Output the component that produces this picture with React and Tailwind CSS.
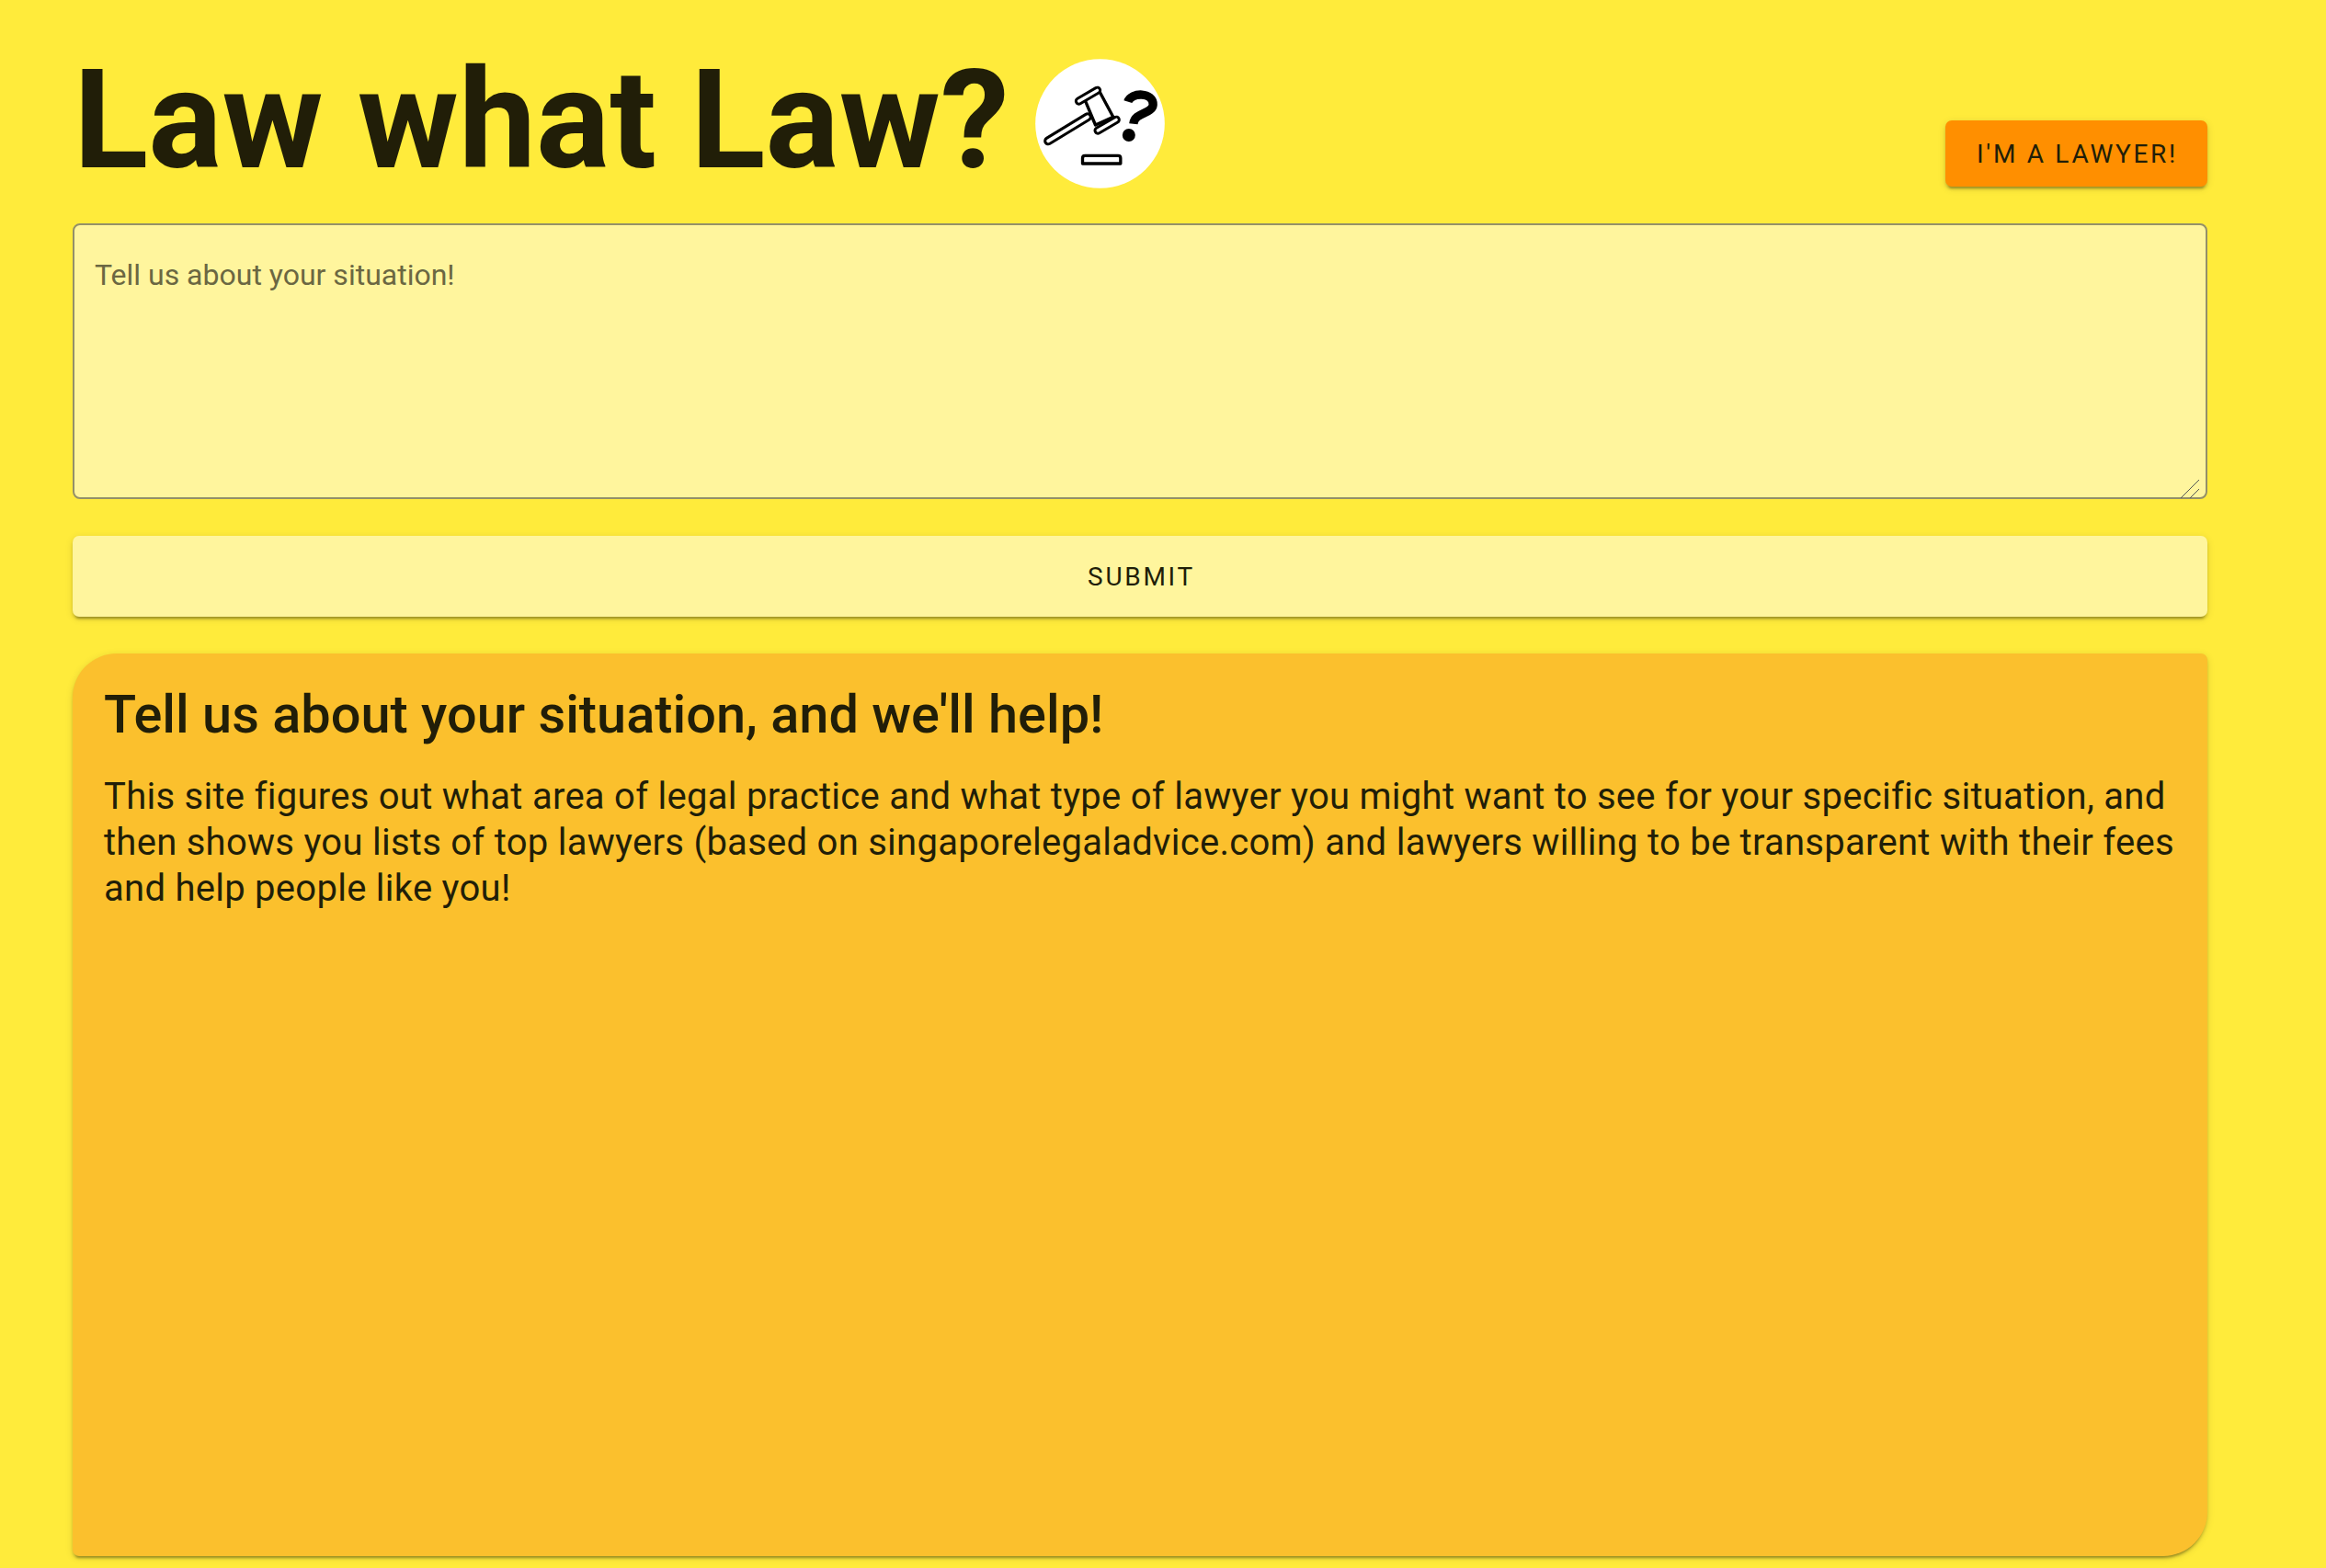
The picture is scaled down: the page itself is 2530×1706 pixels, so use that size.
import React from 'react';

function Logo() {
  return (
    <svg viewBox="80 42 422 423" className="w-[141px] h-[141px] shrink-0">
      <circle cx="291" cy="253.5" r="211" fill="#ffffff" />
      {/* handle */}
      <line x1="122" y1="310" x2="250" y2="232" stroke="#000" strokeWidth="30" strokeLinecap="round" />
      <line x1="122" y1="310" x2="250" y2="232" stroke="#fff" strokeWidth="12" strokeLinecap="round" />
      {/* head */}
      <polygon points="240,172 288,146 334,232 276,258" fill="#fff" stroke="#000" strokeWidth="10" strokeLinejoin="round" />
      <line x1="222" y1="180" x2="282" y2="145" stroke="#000" strokeWidth="28" strokeLinecap="round" />
      <line x1="222" y1="180" x2="282" y2="145" stroke="#fff" strokeWidth="10" strokeLinecap="round" />
      <line x1="284" y1="276" x2="344" y2="241" stroke="#000" strokeWidth="28" strokeLinecap="round" />
      <line x1="284" y1="276" x2="344" y2="241" stroke="#fff" strokeWidth="10" strokeLinecap="round" />
      {/* base */}
      <path d="M234 384 V366 Q234 358 242 358 H350 Q358 358 358 366 V384 Z" fill="#fff" stroke="#000" strokeWidth="10" strokeLinejoin="round" />
      {/* question mark */}
      <path d="M382 182 C392 150 466 150 464 192 C462 222 404 216 400 254" fill="none" stroke="#000" strokeWidth="28" />
      <circle cx="385" cy="291" r="21" fill="#000" />
    </svg>
  );
}

const raised = 'shadow-[0_5px_2px_-3px_rgba(0,0,0,0.2),0_3px_3px_0_rgba(0,0,0,0.14),0_2px_8px_0_rgba(0,0,0,0.12)]';

export default function App() {
  return (
    <div className="min-h-[1706px] bg-[#ffeb3b] text-[#211e08] pl-[79px] pr-[129px] pt-[64px] font-['Roboto',sans-serif]">
      {/* Header */}
      <div className="flex items-start justify-between h-[141px]">
        <div className="flex items-start gap-[28px] ml-[1px]">
          <h1 className="text-[150px] leading-[135px] font-bold">Law what Law?</h1>
          <Logo />
        </div>
        <button className={`w-[285px] h-[72px] mt-[67px] pt-[2px] pl-[2px] rounded-[7px] bg-[#ff8f00] text-[28px] font-[450] tracking-[2.7px] ${raised}`}>
          I'M A LAWYER!
        </button>
      </div>

      <div className="relative mt-[38px]">
        <textarea
          placeholder="Tell us about your situation!"
          className="block w-full h-[300px] px-[22px] pt-[34px] pb-[34px] bg-[#fff59d] border-2 border-[#949068] rounded-[8px] text-[32px] leading-[40px] placeholder:text-[#6b6742] outline-none resize-none"
        />
        {/* resize grip */}
        <svg viewBox="0 0 20 20" className="absolute right-[9px] bottom-[1px] w-[20px] h-[20px]">
          <path d="M0 20 L20 0 M10 20 L20 10" stroke="#555" strokeWidth="1" fill="none" />
        </svg>
      </div>

      <button className={`block w-full h-[88px] mt-[40px] pt-[2px] pl-[3px] rounded-[7px] bg-[#fff59d] text-[28px] font-[450] tracking-[2.7px] ${raised}`}>
        SUBMIT
      </button>

      {/* Info card */}
      <div className={`h-[982px] mt-[40px] pl-[34px] pr-[28px] pt-[31px] bg-[#fbc02d] rounded-tl-[48px] rounded-br-[48px] rounded-tr-[7px] rounded-bl-[7px] ${raised}`}>
        <h2 className="text-[57.7px] leading-[70px] font-medium">Tell us about your situation, and we'll help!</h2>
        <p className="mt-[30px] text-[40px] leading-[50px] tracking-[0.27px]">
          This site figures out what area of legal practice and what type of lawyer you might want to see for your specific situation, and then shows you lists of top lawyers (based on singaporelegaladvice.com) and lawyers willing to be transparent with their fees and help people like you!
        </p>
      </div>
    </div>
  );
}
